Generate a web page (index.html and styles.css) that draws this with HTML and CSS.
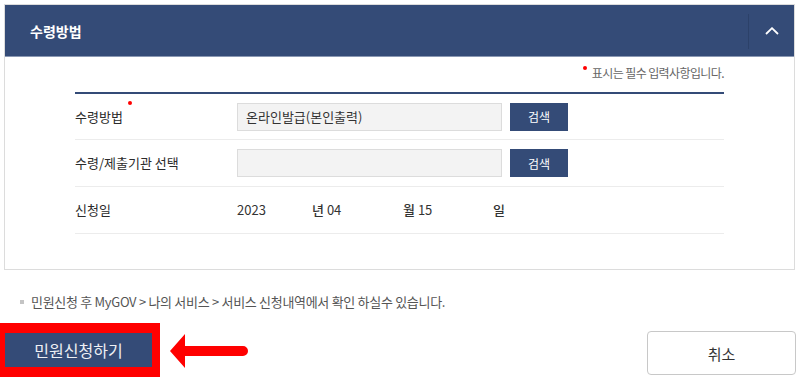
FILE: index.html
```html
<!DOCTYPE html>
<html>
<head>
<title>수령방법</title>
<meta charset="UTF-8">
<meta name="viewport" content="width=device-width, initial-scale=1.0">
<link rel="stylesheet" href="styles.css">
</head>
<body>
<div id="wrapper">

	<div class="panel">
		<div class="panel_head">
			<h2>수령방법</h2>
			<button class="toggle" type="button">
				<svg width="14" height="8" viewBox="0 0 14 8"><path d="M1 7 L7 1.2 L13 7" fill="none" stroke="#fff" stroke-width="1.8"/></svg>
			</button>
		</div>

		<div class="panel_body">
			<p class="req_note"><span class="dot"></span>표시는 필수 입력사항입니다.</p>

			<div class="form_table">
				<div class="row first">
					<div class="label">수령방법<span class="dot sup"></span></div>
					<div class="field">
						<input class="txt" type="text" value="온라인발급(본인출력)" readonly>
						<button class="btn_search" type="button">검색</button>
					</div>
				</div>
				<div class="row">
					<div class="label">수령/제출기관 선택</div>
					<div class="field">
						<input class="txt" type="text" value="" readonly>
						<button class="btn_search" type="button">검색</button>
					</div>
				</div>
				<div class="row">
					<div class="label">신청일</div>
					<div class="field date">
						<span class="d_year">2023</span>
						<span class="d_month"><b>년</b> 04</span>
						<span class="d_day"><b>월</b> 15</span>
						<span><b>일</b></span>
					</div>
				</div>
			</div>
		</div>
	</div>

	<p class="info"><span class="sq"></span>민원신청 후 MyGOV &gt; 나의 서비스 &gt; 서비스 신청내역에서 확인 하실수 있습니다.</p>

	<div class="btn_area">
		<div class="mark">
			<button class="btn_apply" type="button">민원신청하기</button>
		</div>
		<svg class="arrow" width="80" height="34" viewBox="0 0 80 34">
			<path d="M0 17 L15 0 L15 12 L73 12 A5 5 0 0 1 73 22 L15 22 L15 34 Z" fill="#ff0000"/>
		</svg>
		<button class="btn_cancel" type="button">취소</button>
	</div>

</div>
</body>
</html>
```

FILE: styles.css
```css
html, body {
	margin: 0;
	padding: 0;
	background-color: #fff;
	overflow: hidden;
}

body {
	font-family: "Noto Sans CJK KR", "Noto Sans", sans-serif;
	color: #333;
	font-size: 13px;
}

#wrapper {
	width: 800px;
	height: 380px;
	padding-top: 4px;
	box-sizing: border-box;
}

/**************************
/******PANEL
/**/
.panel {
	box-sizing: border-box;
	width: 791px;
	margin-left: 4px;
	border: 1px solid #dcdcdc;
}

.panel_head {
	display: flex;
	align-items: center;
	height: 51px;
	background-color: #344b77;
	border-bottom: 1px solid #8a98b3;
}

.panel_head h2 {
	flex: 1;
	margin: 0 0 0 25px;
	font-size: 14px;
	font-weight: bold;
	color: #fff;
	line-height: 20px;
}

.toggle {
	display: flex;
	align-items: center;
	justify-content: center;
	width: 46px;
	height: 35px;
	margin-top: 1px;
	padding: 0;
	background: none;
	border: 0;
	border-left: 1px solid #2c4169;
}

.panel_body {
	padding: 0 70px 35px;
}

.req_note {
	margin: 0 0 11px;
	padding-top: 8px;
	text-align: right;
	font-size: 12px;
	line-height: 16px;
	letter-spacing: -0.6px;
	color: #666;
}

.dot {
	display: inline-block;
	width: 4px;
	height: 4px;
	border-radius: 50%;
	background-color: #f00;
	vertical-align: top;
	margin: 1px 5px 0 0;
}

.dot.sup {
	position: relative;
	top: -7px;
	margin: 0 0 0 5px;
}

/**************************
/******TABLE
/**/
.form_table {
	border-top: 2px solid #344b77;
}

.row {
	display: flex;
	align-items: center;
	height: 46px;
	border-bottom: 1px solid #ececec;
}

.row.first {
	height: 45px;
}

.label {
	width: 162px;
	font-size: 13px;
	line-height: 18px;
	color: #2b2b2b;
}

.field {
	display: flex;
	align-items: center;
}

.txt {
	box-sizing: border-box;
	width: 265px;
	height: 28px;
	margin: 0;
	padding: 0 8px;
	border: 1px solid #dcdcdc;
	background-color: #f3f3f3;
	font-family: inherit;
	font-size: 13px;
	color: #333;
	outline: none;
}

.btn_search {
	width: 58px;
	height: 28px;
	margin-left: 8px;
	padding: 0;
	border: 0;
	background-color: #344b77;
	color: #fff;
	font-family: inherit;
	font-size: 12px;
}

.date span {
	font-size: 13px;
	line-height: 18px;
}

.date b {
	font-weight: 500;
}

.d_year {
	width: 75px;
}

.d_month {
	width: 91px;
}

.d_day {
	width: 90px;
}

/**************************
/******BOTTOM
/**/
.info {
	margin: 24px 0 0 20px;
	font-size: 13px;
	line-height: 16px;
	letter-spacing: -0.3px;
	color: #555;
}

.sq {
	display: inline-block;
	width: 4px;
	height: 4px;
	background-color: #c4c4c4;
	vertical-align: middle;
	margin: -2px 7px 0 0;
}

.btn_area {
	display: flex;
	align-items: flex-start;
	margin-top: 13px;
}

.mark {
	border: solid #ff0000;
	border-width: 10px 8px 10px 5px;
}

.btn_apply {
	display: block;
	width: 147px;
	height: 34px;
	padding: 0;
	border: 0;
	background-color: #344b77;
	color: #eef0f4;
	font-family: inherit;
	font-size: 16px;
}

.arrow {
	margin: 11px 0 0 10px;
}

.btn_cancel {
	box-sizing: border-box;
	width: 149px;
	height: 44px;
	margin: 8px 4px 0 auto;
	padding: 0;
	background-color: #fff;
	border: 1px solid #c8c8c8;
	border-radius: 4px;
	color: #333;
	font-family: inherit;
	font-size: 15px;
}
```
